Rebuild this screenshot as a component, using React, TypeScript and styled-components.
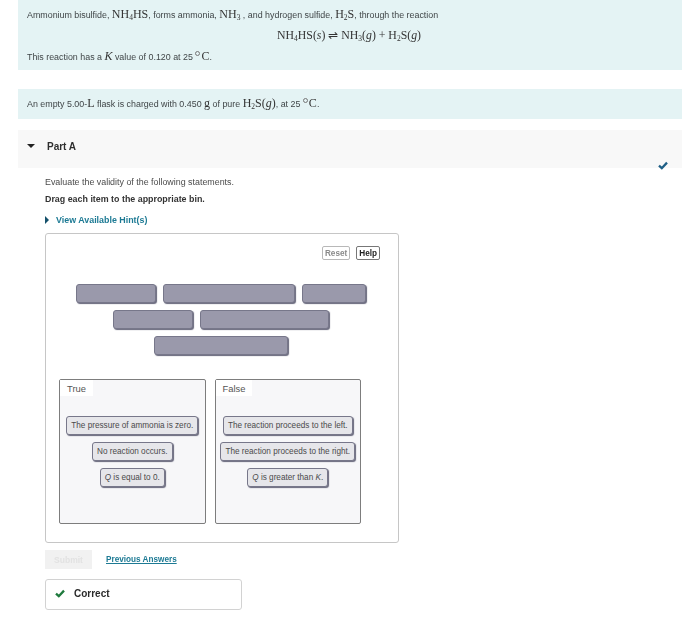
import styled, { createGlobalStyle } from 'styled-components'

const GlobalStyle = createGlobalStyle`
  html, body {
    margin: 0;
    padding: 0;
    background: #fff;
    font-family: 'Liberation Sans', Arial, sans-serif;
    color: #3a3a3a;
  }
`

const Page = styled.div`
  width: 700px;
  height: 621px;
  overflow: hidden;
  padding: 0 18px;
  box-sizing: border-box;
  filter: blur(0.4px);
`

const Intro = styled.section`
  background: #e4f3f4;
  height: 70px;
  padding: 9px 9px 0;
  box-sizing: border-box;
  font-size: 8.9px;
  color: #404648;
`

const Given = styled.section`
  background: #e4f3f4;
  height: 30px;
  margin-top: 19px;
  padding: 1px 9px 0;
  box-sizing: border-box;
  display: flex;
  align-items: center;
  font-size: 8.9px;
  color: #404648;
`

const Line = styled.p`
  margin: 0;
  height: 13px;
  line-height: 13px;
  white-space: pre;
`

const Equation = styled.p`
  margin: 7px 0 9px 250px;
  height: 13px;
  line-height: 13px;
  white-space: pre;
  font-family: 'Liberation Serif', serif;
  font-size: 11.8px;
  color: #333;
`

const M = styled.span`
  font-family: 'Liberation Serif', serif;
  font-size: 12px;
  line-height: 0;
  color: #333;
`

const MI = styled.i`
  font-family: 'Liberation Serif', serif;
`

const Sub = styled.span`
  font-size: 7.5px;
  line-height: 0;
  vertical-align: -2px;
`

const Degree = styled.span`
  display: inline-block;
  width: 3px;
  height: 3px;
  margin-right: 1px;
  border: 0.6px solid #777;
  border-radius: 50%;
  vertical-align: 4px;
`

const PartHeader = styled.header`
  margin-top: 11px;
  height: 38px;
  box-sizing: border-box;
  background: #f8f8f8;
  display: flex;
  align-items: center;
  gap: 12px;
  padding: 0 0 6px 9px;
  font-size: 10px;
  font-weight: 700;
  color: #2e2e2e;
`

const Caret = styled.span`
  width: 0;
  height: 0;
  border-left: 4px solid transparent;
  border-right: 4px solid transparent;
  border-top: 4px solid #222;
`

const PartBody = styled.div`
  position: relative;
  padding: 9px 0 0 27px;
`

const DoneCheck = styled.svg`
  position: absolute;
  top: -7px;
  right: 14px;
  width: 10px;
  height: 9px;
`

const Prompt = styled.p`
  margin: 0 0 7px;
  height: 10px;
  line-height: 10px;
  font-size: 8.9px;
  color: #4b4b4b;
`

const Instruction = styled(Prompt)`
  font-weight: 700;
  color: #333;
  margin-bottom: 11px;
`

const HintRow = styled.a`
  display: flex;
  align-items: center;
  gap: 7px;
  height: 10px;
  font-size: 8.9px;
  font-weight: 700;
  color: #1d7a94;
`

const HintCaret = styled.span`
  width: 0;
  height: 0;
  border-top: 4px solid transparent;
  border-bottom: 4px solid transparent;
  border-left: 4px solid #14506b;
`

const Board = styled.div`
  margin-top: 8px;
  width: 354px;
  height: 310px;
  box-sizing: border-box;
  border: 1px solid #c6c6c6;
  border-radius: 3px;
  padding: 12px 0 0 13px;
`

const Tools = styled.div`
  display: flex;
  justify-content: flex-end;
  gap: 6px;
  padding-right: 18px;
`

const ToolButton = styled.button<{ $off?: boolean }>`
  height: 14px;
  padding: 0 2px;
  font: 700 8.2px 'Liberation Sans', Arial, sans-serif;
  background: #fff;
  border: 1px solid ${p => (p.$off ? '#b8b8b8' : '#777')};
  border-radius: 2px;
  color: ${p => (p.$off ? '#8a8a8a' : '#222')};
`

const Tokens = styled.div`
  margin: 24px 2px 0 -13px;
  display: flex;
  flex-direction: column;
  align-items: center;
  gap: 7px;
`

const TokenRow = styled.div`
  display: flex;
  gap: 7px;
`

const Token = styled.div<{ $w: number }>`
  width: ${p => p.$w}px;
  height: 19px;
  box-sizing: border-box;
  background: #9a99ab;
  border: 1px solid #77778a;
  border-radius: 3px;
  box-shadow: 1px 1px 1px #66667a;
`

const Bins = styled.div`
  margin-top: 24px;
  display: flex;
  gap: 9px;
`

const Bin = styled.div`
  width: 146.5px;
  height: 145px;
  box-sizing: border-box;
  border: 1px solid #7d7d7d;
  border-radius: 2px;
  background: #f7f7f9;
  display: flex;
  flex-direction: column;
  align-items: center;
  position: relative;
  padding-top: 36px;
  gap: 7px;
`

const BinLabel = styled.span`
  position: absolute;
  top: 0;
  left: 0;
  padding: 3px 7px 2px;
  background: #fff;
  font-size: 9.4px;
  color: #555;
`

const Item = styled.div`
  height: 19px;
  box-sizing: border-box;
  padding: 0 4px 1px;
  display: flex;
  align-items: center;
  white-space: pre;
  background: #e6e6ea;
  border: 1px solid #77778a;
  border-radius: 3px;
  box-shadow: 1px 1px 1px #66667a;
  font-size: 8.2px;
  color: #4a4a4a;
`

const Actions = styled.div`
  margin-top: 7px;
  display: flex;
  align-items: center;
  gap: 14px;
`

const Submit = styled.button`
  width: 47px;
  height: 19px;
  border: 0;
  background: #f1f1f1;
  color: #e2e2e2;
  font: 700 8.5px 'Liberation Sans', Arial, sans-serif;
  padding: 0;
`

const Previous = styled.a`
  font-size: 8.2px;
  font-weight: 700;
  color: #1d7a94;
  text-decoration: underline;
`

const Feedback = styled.div`
  margin-top: 10px;
  width: 197px;
  height: 31px;
  box-sizing: border-box;
  border: 1px solid #d2d2d2;
  border-radius: 3px;
  display: flex;
  align-items: center;
  gap: 9px;
  padding: 0 0 2px 9px;
  font-size: 10px;
  font-weight: 700;
  color: #2b2b2b;
`

const CheckMark = ({ color, className }: { color: string; className?: string }) => (
  <svg className={className} viewBox="0 0 10 9" width="10" height="9">
    <path d="M1 4.6 L3.8 7.2 L9 1.6" fill="none" stroke={color} strokeWidth="2.3" />
  </svg>
)

export default function App() {
  return (
    <>
      <GlobalStyle />
      <Page>
        <Intro>
          <Line>
            Ammonium bisulfide, <M>NH<Sub>4</Sub>HS</M>, forms ammonia, <M>NH<Sub>3</Sub></M> , and hydrogen sulfide, <M>H<Sub>2</Sub>S</M>, through the reaction
          </Line>
          <Equation>
            NH<Sub>4</Sub>HS(<MI>s</MI>) ⇌ NH<Sub>3</Sub>(<MI>g</MI>) + H<Sub>2</Sub>S(<MI>g</MI>)
          </Equation>
          <Line>
            This reaction has a <M><MI>K</MI></M> value of 0.120 at 25 <Degree /><M>C</M>.
          </Line>
        </Intro>
        <Given>
          <Line>
            An empty 5.00-<M>L</M> flask is charged with 0.450 <M>g</M> of pure <M>H<Sub>2</Sub>S(<MI>g</MI>)</M>, at 25 <Degree /><M>C</M>.
          </Line>
        </Given>
        <PartHeader>
          <Caret />
          <span>Part A</span>
        </PartHeader>
        <PartBody>
          <DoneCheck as={CheckMark} color="#1f5f86" />
          <Prompt>Evaluate the validity of the following statements.</Prompt>
          <Instruction>Drag each item to the appropriate bin.</Instruction>
          <HintRow>
            <HintCaret />
            View Available Hint(s)
          </HintRow>
          <Board>
            <Tools>
              <ToolButton $off>Reset</ToolButton>
              <ToolButton>Help</ToolButton>
            </Tools>
            <Tokens>
              <TokenRow>
                <Token $w={80} />
                <Token $w={132} />
                <Token $w={64} />
              </TokenRow>
              <TokenRow>
                <Token $w={80} />
                <Token $w={129} />
              </TokenRow>
              <TokenRow>
                <Token $w={134} />
              </TokenRow>
            </Tokens>
            <Bins>
              <Bin>
                <BinLabel>True</BinLabel>
                <Item>The pressure of ammonia is zero.</Item>
                <Item>No reaction occurs.</Item>
                <Item><i>Q</i> is equal to 0.</Item>
              </Bin>
              <Bin>
                <BinLabel>False</BinLabel>
                <Item>The reaction proceeds to the left.</Item>
                <Item>The reaction proceeds to the right.</Item>
                <Item><i>Q</i> is greater than <i>K</i>.</Item>
              </Bin>
            </Bins>
          </Board>
          <Actions>
            <Submit>Submit</Submit>
            <Previous>Previous Answers</Previous>
          </Actions>
          <Feedback>
            <CheckMark color="#1f7a3d" />
            Correct
          </Feedback>
        </PartBody>
      </Page>
    </>
  )
}
